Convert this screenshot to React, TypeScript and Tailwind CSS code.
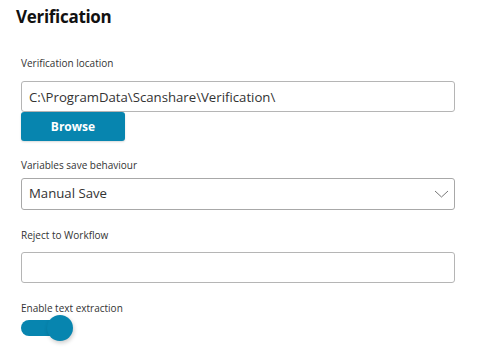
import { useState } from 'react';

function Label({ children }: { children: React.ReactNode }) {
    return <div className="text-[10px] leading-[14px] text-[#333]">{children}</div>;
}

export default function App() {
    const [enabled, setEnabled] = useState(true);

    return (
        <div className="h-[355px] w-[480px] bg-white" style={{ fontFamily: '"Open Sans", "Liberation Sans", sans-serif' }}>
            <h1 className="pl-[16px] pt-[6px] text-[17px] font-bold leading-[22px] tracking-[-0.3px] text-[#111]">Verification</h1>

            <div className="flex flex-col pl-[21px] pr-[25px]">
                <div className="mt-[28px]">
                    <Label>Verification location</Label>
                    <input
                        readOnly
                        value="C:\ProgramData\Scanshare\Verification\"
                        className="mt-[11px] block h-[31px] w-full rounded-[3px] border border-[#b5b5b5] px-[7px] text-[13.2px] text-[#333] outline-none"
                    />
                    <button
                        type="button"
                        className="block h-[29px] w-[104px] rounded-[3px] bg-[#0785af] text-[12px] font-bold text-white shadow-[0_1px_2px_rgba(0,0,0,0.15)]"
                    >
                        Browse
                    </button>
                </div>

                <div className="mt-[17px]">
                    <Label>Variables save behaviour</Label>
                    <div className="mt-[6px] flex h-[32px] w-full items-center justify-between rounded-[3px] border border-[#a8a8a8] pl-[7px] pr-[5px]">
                        <span className="text-[13.2px] text-[#333]">Manual Save</span>
                        <svg width="15" height="8" viewBox="0 0 15 8" fill="none" className="mb-[1px]">
                            <path d="M1 1L7.5 7L14 1" stroke="#777" strokeWidth="1" />
                        </svg>
                    </div>
                </div>

                <div className="mt-[18px]">
                    <Label>Reject to Workflow</Label>
                    <input className="mt-[10px] block h-[31px] w-full rounded-[3px] border border-[#b5b5b5] px-[7px] text-[13.2px] outline-none" />
                </div>

                <div className="mt-[18px]">
                    <Label>Enable text extraction</Label>
                    <button
                        type="button"
                        onClick={() => setEnabled(!enabled)}
                        className="relative block h-[26px] w-[54px]"
                    >
                        <span className="absolute left-0 top-[5px] h-[16px] w-[40px] rounded-full bg-[#0785af]" />
                        <span
                            className={`absolute top-0 h-[26px] w-[26px] rounded-full bg-[#0785af] shadow-[1px_2px_4px_rgba(0,0,0,0.2)] ${enabled ? 'left-[26px]' : 'left-0'}`}
                        />
                    </button>
                </div>
            </div>
        </div>
    );
}
